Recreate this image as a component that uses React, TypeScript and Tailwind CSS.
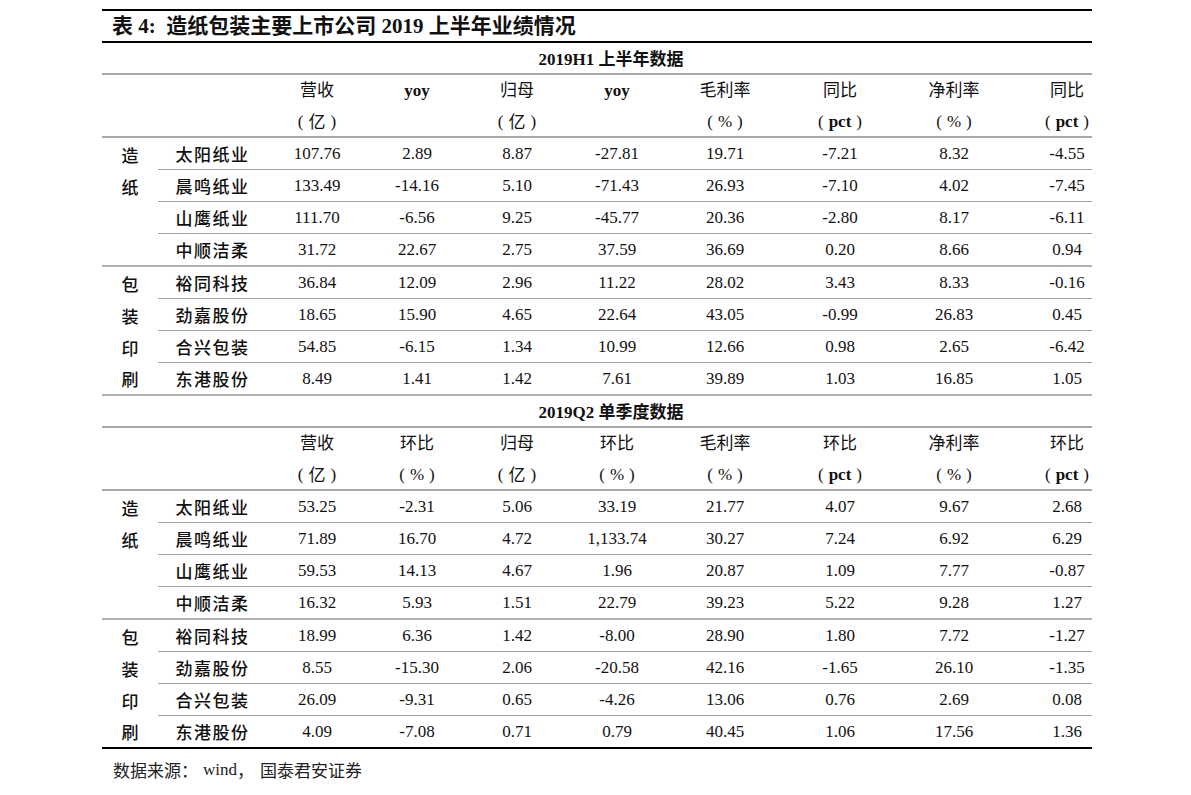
import React from "react";

type Row = [string, ...string[]];

const h1Groups: { labels: string[]; rows: Row[] }[] = [
  {
    labels: ["造", "纸", "", ""],
    rows: [
      ["太阳纸业", "107.76", "2.89", "8.87", "-27.81", "19.71", "-7.21", "8.32", "-4.55"],
      ["晨鸣纸业", "133.49", "-14.16", "5.10", "-71.43", "26.93", "-7.10", "4.02", "-7.45"],
      ["山鹰纸业", "111.70", "-6.56", "9.25", "-45.77", "20.36", "-2.80", "8.17", "-6.11"],
      ["中顺洁柔", "31.72", "22.67", "2.75", "37.59", "36.69", "0.20", "8.66", "0.94"],
    ],
  },
  {
    labels: ["包", "装", "印", "刷"],
    rows: [
      ["裕同科技", "36.84", "12.09", "2.96", "11.22", "28.02", "3.43", "8.33", "-0.16"],
      ["劲嘉股份", "18.65", "15.90", "4.65", "22.64", "43.05", "-0.99", "26.83", "0.45"],
      ["合兴包装", "54.85", "-6.15", "1.34", "10.99", "12.66", "0.98", "2.65", "-6.42"],
      ["东港股份", "8.49", "1.41", "1.42", "7.61", "39.89", "1.03", "16.85", "1.05"],
    ],
  },
];

const q2Groups: { labels: string[]; rows: Row[] }[] = [
  {
    labels: ["造", "纸", "", ""],
    rows: [
      ["太阳纸业", "53.25", "-2.31", "5.06", "33.19", "21.77", "4.07", "9.67", "2.68"],
      ["晨鸣纸业", "71.89", "16.70", "4.72", "1,133.74", "30.27", "7.24", "6.92", "6.29"],
      ["山鹰纸业", "59.53", "14.13", "4.67", "1.96", "20.87", "1.09", "7.77", "-0.87"],
      ["中顺洁柔", "16.32", "5.93", "1.51", "22.79", "39.23", "5.22", "9.28", "1.27"],
    ],
  },
  {
    labels: ["包", "装", "印", "刷"],
    rows: [
      ["裕同科技", "18.99", "6.36", "1.42", "-8.00", "28.90", "1.80", "7.72", "-1.27"],
      ["劲嘉股份", "8.55", "-15.30", "2.06", "-20.58", "42.16", "-1.65", "26.10", "-1.35"],
      ["合兴包装", "26.09", "-9.31", "0.65", "-4.26", "13.06", "0.76", "2.69", "0.08"],
      ["东港股份", "4.09", "-7.08", "0.71", "0.79", "40.45", "1.06", "17.56", "1.36"],
    ],
  },
];

type HeadCell = { top: React.ReactNode; bottom: React.ReactNode };

const Paren = ({ children }: { children: React.ReactNode }) => (
  <span className="flex items-center">
    <span>(</span>
    <span className="mx-[5px]">{children}</span>
    <span>)</span>
  </span>
);

const Yi = () => (
  <Paren>
    <span className="font-['Noto_Sans_CJK_SC']">亿</span>
  </Paren>
);
const Pct = () => (
  <Paren>
    <span className="font-bold">pct</span>
  </Paren>
);
const Percent = () => (
  <Paren>
    <span>%</span>
  </Paren>
);
const Yoy = () => <span className="font-bold">yoy</span>;

const h1Heads: HeadCell[] = [
  { top: "营收", bottom: <Yi /> },
  { top: <Yoy />, bottom: "" },
  { top: "归母", bottom: <Yi /> },
  { top: <Yoy />, bottom: "" },
  { top: "毛利率", bottom: <Percent /> },
  { top: "同比", bottom: <Pct /> },
  { top: "净利率", bottom: <Percent /> },
  { top: "同比", bottom: <Pct /> },
];

const q2Heads: HeadCell[] = [
  { top: "营收", bottom: <Yi /> },
  { top: "环比", bottom: <Percent /> },
  { top: "归母", bottom: <Yi /> },
  { top: "环比", bottom: <Percent /> },
  { top: "毛利率", bottom: <Percent /> },
  { top: "环比", bottom: <Pct /> },
  { top: "净利率", bottom: <Percent /> },
  { top: "环比", bottom: <Pct /> },
];

function HeaderRow({ heads }: { heads: HeadCell[] }) {
  return (
    <div className="grid h-[63px] grid-cols-[56px_109px_100px_100px_100px_100px_116px_114px_114px_81px] border-b-2 border-[#a8a8a8]">
      <div />
      <div />
      {heads.map((h, i) => (
        <div
          key={i}
          className={`flex flex-col ${i === heads.length - 1 ? "pl-[31px]" : ""}`}
        >
          <div className="flex h-[31px] items-center justify-center leading-none">{h.top}</div>
          <div className="flex h-[30px] items-center justify-center leading-none">{h.bottom}</div>
        </div>
      ))}
    </div>
  );
}

function Group({
  labels,
  rows,
  last,
}: {
  labels: string[];
  rows: Row[];
  last?: boolean;
}) {
  return (
    <div className={`flex border-b-2 ${last ? "border-black" : "border-[#b0b0b0]"}`}>
      <div className="flex w-[56px] flex-col">
        {labels.map((l, i) => (
          <div
            key={i}
            className={`flex items-center justify-center font-['Noto_Sans_CJK_SC'] font-medium leading-none ${
              i === labels.length - 1 ? "h-[31px]" : "h-[32px]"
            }`}
          >
            {l}
          </div>
        ))}
      </div>
      <div className="flex flex-1 flex-col">
        {rows.map((r, i) => (
          <div
            key={i}
            className={`grid grid-cols-[109px_100px_100px_100px_100px_116px_114px_114px_81px] ${
              i === rows.length - 1 ? "h-[31px]" : "h-[32px] border-b border-[#a0a0a0]"
            }`}
          >
            {r.map((c, j) => (
              <div
                key={j}
                className={`flex items-center justify-center leading-none ${
                  j === 0 ? "font-['Noto_Sans_CJK_SC'] font-medium tracking-[1.5px]" : ""
                } ${j === r.length - 1 ? "pl-[31px]" : ""}`}
              >
                {c}
              </div>
            ))}
          </div>
        ))}
      </div>
    </div>
  );
}

function Section({
  title,
  heads,
  groups,
  last,
}: {
  title: React.ReactNode;
  heads: HeadCell[];
  groups: { labels: string[]; rows: Row[] }[];
  last?: boolean;
}) {
  return (
    <div className="flex flex-col">
      <div className="flex h-[32px] items-center justify-center border-b-2 border-[#a8a8a8] pl-[28px] font-bold leading-none">
        {title}
      </div>
      <HeaderRow heads={heads} />
      {groups.map((g, i) => (
        <Group key={i} labels={g.labels} rows={g.rows} last={last && i === groups.length - 1} />
      ))}
    </div>
  );
}

export default function App() {
  return (
    <div className="h-[795px] w-[1191px] bg-white pt-[9px] font-['Liberation_Serif','Noto_Sans_CJK_SC',serif] text-[17px] text-[#111]">
      <div className="ml-[102px] w-[990px]">
        <div className="flex h-[34px] items-center border-y-2 border-black pl-[10px] text-[21px] font-bold leading-none">
          <span>表 4:&nbsp; 造纸包装主要上市公司 2019 上半年业绩情况</span>
        </div>
        <Section
          title={
            <span>
              2019H1 <span className="font-['Noto_Sans_CJK_SC']">上半年数据</span>
            </span>
          }
          heads={h1Heads}
          groups={h1Groups}
        />
        <Section
          title={
            <span>
              2019Q2 <span className="font-['Noto_Sans_CJK_SC']">单季度数据</span>
            </span>
          }
          heads={q2Heads}
          groups={q2Groups}
          last
        />
        <div className="flex h-[40px] items-center pl-[11px] font-['Noto_Sans_CJK_SC'] text-[17px] leading-none text-[#222]">
          <span>数据来源：</span>
          <span className="ml-[5px] font-['Liberation_Serif']">wind</span>
          <span>，</span>
          <span className="ml-[6px]">国泰君安证券</span>
        </div>
      </div>
    </div>
  );
}
